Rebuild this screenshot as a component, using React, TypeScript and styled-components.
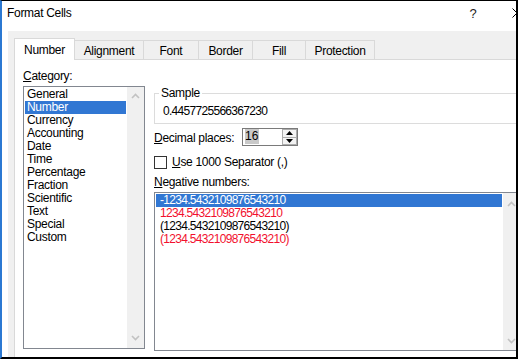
import React from 'react';
import styled, { createGlobalStyle } from 'styled-components';

const GlobalStyle = createGlobalStyle`
  html, body {
    margin: 0;
    padding: 0;
    background: #fff;
  }
  body {
    font-family: "Liberation Sans", Arial, sans-serif;
    font-size: 12px;
    letter-spacing: -0.3px;
    color: #000;
  }
  * {
    box-sizing: border-box;
  }
`;

const Window = styled.div`
  width: 518px;
  height: 359px;
  overflow: hidden;
  display: flex;
  flex-direction: column;
  background: #fff;
  border-top: 1px solid #000;
  border-right: 2px solid #000;
  border-bottom: 2px solid #000;
  border-left: 2px solid #2b78d2;
`;

const TitleBar = styled.div`
  height: 24px;
  flex-shrink: 0;
  display: flex;
  align-items: center;
  padding-left: 5px;
`;

const Title = styled.span`
  line-height: 14px;
`;

const HelpButton = styled.span`
  margin-left: auto;
  width: 20px;
  text-align: center;
  font-size: 13px;
  color: #222;
`;

const CloseButton = styled.span`
  width: 33px;
  flex-shrink: 0;
  display: flex;
  align-items: center;

  svg {
    flex-shrink: 0;
    margin-left: 29px;
  }
`;

const Body = styled.div`
  flex: 1;
  display: flex;
  padding: 6px 0 0 6px;
  min-height: 0;
`;

const Sheet = styled.div`
  flex: 1;
  display: flex;
  flex-direction: column;
  background: #f0f0f0;
  padding: 7px 0 0 6px;
  min-height: 0;
`;

const TabRow = styled.div`
  height: 22px;
  margin-bottom: -1px;
  display: flex;
  align-items: flex-start;
  position: relative;
  z-index: 1;
`;

const Tab = styled.div<{ $active?: boolean; $width: number }>`
  width: ${(p) => p.$width}px;
  flex-shrink: 0;
  display: flex;
  justify-content: center;
  align-items: center;
  border: 1px solid #d9d9d9;
  border-bottom: none;
  margin-left: -1px;
  &:first-child {
    margin-left: 0;
  }
  height: ${(p) => (p.$active ? 22 : 19)}px;
  margin-top: ${(p) => (p.$active ? 0 : 2)}px;
  padding-top: ${(p) => (p.$active ? 0 : 1)}px;
  background: ${(p) => (p.$active ? '#fff' : '#f0f0f0')};
  position: relative;
  z-index: ${(p) => (p.$active ? 2 : 1)};
`;

const Panel = styled.div`
  flex: 1;
  display: flex;
  gap: 9px;
  padding: 10px 0 0 8px;
  background: #fff;
  border-top: 1px solid #d9d9d9;
  border-left: 1px solid #d9d9d9;
  overflow: hidden;
`;

const LeftColumn = styled.div`
  width: 122px;
  flex-shrink: 0;
  display: flex;
  flex-direction: column;
`;

const RightColumn = styled.div`
  width: 367px;
  flex-shrink: 0;
  display: flex;
  flex-direction: column;
  padding-top: 16px;
`;

const Label = styled.div<{ $gap?: number }>`
  line-height: 13px;
  height: 13px;
  white-space: nowrap;
  margin-bottom: ${(p) => p.$gap ?? 0}px;
`;

const ListBox = styled.div<{ $height: number }>`
  height: ${(p) => p.$height}px;
  flex-shrink: 0;
  display: flex;
  border: 1px solid #828790;
  background: #fff;
`;

const ListItems = styled.div`
  flex: 1;
  padding: 1px;
  min-width: 0;
`;

const ListItem = styled.div<{ $selected?: boolean; $red?: boolean; $inset: number; $numeric?: boolean }>`
  height: 13px;
  line-height: 13px;
  white-space: nowrap;
  padding-left: ${(p) => p.$inset}px;
  letter-spacing: ${(p) => (p.$numeric ? '-0.7px' : '-0.3px')};
  background: ${(p) => (p.$selected ? '#3177d3' : 'transparent')};
  color: ${(p) => (p.$selected ? '#fff' : p.$red ? '#f2102e' : '#000')};
`;

const ScrollTrack = styled.div<{ $top: number; $bottom: number }>`
  width: 17px;
  flex-shrink: 0;
  background: #f0f0f0;
  display: flex;
  flex-direction: column;
  justify-content: space-between;
  align-items: center;
  padding: ${(p) => p.$top}px 0 ${(p) => p.$bottom}px;
`;

const SampleBox = styled.fieldset`
  margin: 0;
  min-width: 0;
  border: 1px solid #dcdcdc;
  padding: 0 0 5px 4px;

  legend {
    padding: 0 2px;
    line-height: 14px;
  }
`;

const SampleValue = styled.div`
  margin-top: 5px;
  padding-left: 4px;
  line-height: 13px;
  letter-spacing: -0.7px;
`;

const Row = styled.div<{ $gap: number }>`
  display: flex;
  align-items: center;
  margin-top: ${(p) => p.$gap}px;
`;

const FieldLabel = styled.span`
  width: 88px;
  flex-shrink: 0;
  white-space: nowrap;
  padding-top: 2px;
`;

const SpinBox = styled.div`
  width: 56px;
  height: 18px;
  display: flex;
  border: 1px solid #7a7a7a;
  background: #fff;
`;

const SpinValue = styled.div`
  flex: 1;
  padding: 0 0 1px 2px;

  span {
    display: inline-block;
    background: #c9c9c9;
    line-height: 15px;
    letter-spacing: 0;
    padding-right: 1px;
  }
`;

const SpinButtons = styled.div`
  width: 15px;
  display: flex;
  flex-direction: column;
  border: 1px solid #acacac;
  margin: 0 0 0 0;
`;

const SpinButton = styled.div`
  flex: 1;
  display: flex;
  align-items: center;
  justify-content: center;
  background: #f3f3f3;
  & + & {
    border-top: 1px solid #acacac;
  }
`;

const CheckBox = styled.span`
  width: 13px;
  height: 13px;
  flex-shrink: 0;
  border: 1px solid #333;
  background: #fff;
  margin-right: 5px;
`;

const CheckLabel = styled.span`
  line-height: 13px;
  white-space: nowrap;
`;

const Chevron = ({ down }: { down?: boolean }) => (
  <svg width="9" height="6" viewBox="0 0 9 6">
    <polyline
      points={down ? '1,1 4.5,4.5 8,1' : '1,5 4.5,1.5 8,5'}
      fill="none"
      stroke="#c2c2c2"
      strokeWidth="1.6"
    />
  </svg>
);

const Triangle = ({ down }: { down?: boolean }) => (
  <svg width="7" height="4" viewBox="0 0 7 4">
    <polygon points={down ? '0,0 7,0 3.5,4' : '0,4 7,4 3.5,0'} fill="#000" />
  </svg>
);

const tabs = [
  { name: 'Number', width: 61 },
  { name: 'Alignment', width: 70 },
  { name: 'Font', width: 56 },
  { name: 'Border', width: 55 },
  { name: 'Fill', width: 54 },
  { name: 'Protection', width: 70 },
];

const categories = [
  'General',
  'Number',
  'Currency',
  'Accounting',
  'Date',
  'Time',
  'Percentage',
  'Fraction',
  'Scientific',
  'Text',
  'Special',
  'Custom',
];

const negatives = [
  { text: '-1234.5432109876543210', red: false },
  { text: '1234.5432109876543210', red: true },
  { text: '(1234.5432109876543210)', red: false },
  { text: '(1234.5432109876543210)', red: true },
];

export default function App() {
  return (
    <>
      <GlobalStyle />
      <Window>
        <TitleBar>
          <Title>Format Cells</Title>
          <HelpButton>?</HelpButton>
          <CloseButton>
            <svg width="10" height="10" viewBox="0 0 10 10">
              <path d="M0.5 0.5 L9.5 9.5 M9.5 0.5 L0.5 9.5" stroke="#000" strokeWidth="1" />
            </svg>
          </CloseButton>
        </TitleBar>
        <Body>
          <Sheet>
            <TabRow>
              {tabs.map((t, i) => (
                <Tab key={t.name} $width={t.width} $active={i === 0}>
                  {t.name}
                </Tab>
              ))}
            </TabRow>
            <Panel>
              <LeftColumn>
                <Label $gap={3}>
                  <u>C</u>ategory:
                </Label>
                <ListBox $height={263}>
                  <ListItems>
                    {categories.map((c) => (
                      <ListItem key={c} $inset={2} $selected={c === 'Number'}>
                        {c}
                      </ListItem>
                    ))}
                  </ListItems>
                  <ScrollTrack $top={6} $bottom={7}>
                    <Chevron />
                    <Chevron down />
                  </ScrollTrack>
                </ListBox>
              </LeftColumn>
              <RightColumn>
                <SampleBox>
                  <legend>Sample</legend>
                  <SampleValue>0.4457725566367230</SampleValue>
                </SampleBox>
                <Row $gap={4}>
                  <FieldLabel>
                    <u>D</u>ecimal places:
                  </FieldLabel>
                  <SpinBox>
                    <SpinValue>
                      <span>16</span>
                    </SpinValue>
                    <SpinButtons>
                      <SpinButton>
                        <Triangle />
                      </SpinButton>
                      <SpinButton>
                        <Triangle down />
                      </SpinButton>
                    </SpinButtons>
                  </SpinBox>
                </Row>
                <Row $gap={10}>
                  <CheckBox />
                  <CheckLabel>
                    <u>U</u>se 1000 Separator (,)
                  </CheckLabel>
                </Row>
                <Row $gap={7}>
                  <Label $gap={3}>
                    <u>N</u>egative numbers:
                  </Label>
                </Row>
                <ListBox $height={159}>
                  <ListItems>
                    {negatives.map((n, i) => (
                      <ListItem key={i} $inset={4} $numeric $red={n.red} $selected={i === 0}>
                        {n.text}
                      </ListItem>
                    ))}
                  </ListItems>
                  <ScrollTrack $top={8} $bottom={6}>
                    <Chevron />
                    <Chevron down />
                  </ScrollTrack>
                </ListBox>
              </RightColumn>
            </Panel>
          </Sheet>
        </Body>
      </Window>
    </>
  );
}
